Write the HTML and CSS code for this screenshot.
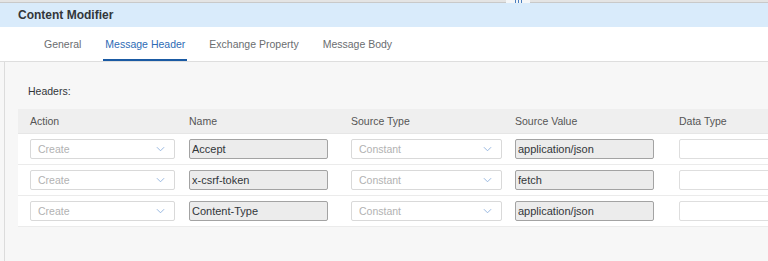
FILE: index.html
```html
<!DOCTYPE html>
<html lang="en">
<head>
    <meta charset="UTF-8">
    <title>Content Modifier</title>
    <link rel="stylesheet" href="styles.css">
</head>
<body>
    <div class="topbar">
        <div class="grip"><span></span><span></span><span></span></div>
    </div>
    <div class="title">Content Modifier</div>
    <div class="tabs">
        <div class="tab">General</div>
        <div class="tab active">Message Header</div>
        <div class="tab">Exchange Property</div>
        <div class="tab">Message Body</div>
    </div>

    <div class="content">
        <div class="section-label">Headers:</div>
        <div class="table">
            <div class="row head">
                <div class="cell">Action</div>
                <div class="cell">Name</div>
                <div class="cell">Source Type</div>
                <div class="cell">Source Value</div>
                <div class="cell">Data Type</div>
            </div>

            <div class="row">
                <div class="cell"><div class="select wide">Create<svg viewBox="0 0 10 6"><path d="M1 1l4 4 4-4"/></svg></div></div>
                <div class="cell"><input class="field" value="Accept" readonly></div>
                <div class="cell"><div class="select">Constant<svg viewBox="0 0 10 6"><path d="M1 1l4 4 4-4"/></svg></div></div>
                <div class="cell"><input class="field" value="application/json" readonly></div>
                <div class="cell"><input class="field empty" value="" readonly></div>
            </div>

            <div class="row">
                <div class="cell"><div class="select wide">Create<svg viewBox="0 0 10 6"><path d="M1 1l4 4 4-4"/></svg></div></div>
                <div class="cell"><input class="field" value="x-csrf-token" readonly></div>
                <div class="cell"><div class="select">Constant<svg viewBox="0 0 10 6"><path d="M1 1l4 4 4-4"/></svg></div></div>
                <div class="cell"><input class="field" value="fetch" readonly></div>
                <div class="cell"><input class="field empty" value="" readonly></div>
            </div>

            <div class="row">
                <div class="cell"><div class="select wide">Create<svg viewBox="0 0 10 6"><path d="M1 1l4 4 4-4"/></svg></div></div>
                <div class="cell"><input class="field" value="Content-Type" readonly></div>
                <div class="cell"><div class="select">Constant<svg viewBox="0 0 10 6"><path d="M1 1l4 4 4-4"/></svg></div></div>
                <div class="cell"><input class="field" value="application/json" readonly></div>
                <div class="cell"><input class="field empty" value="" readonly></div>
            </div>
        </div>
    </div>
</body>
</html>
```

FILE: styles.css
```css
body {
    margin: 0;
    font-family: 'Liberation Sans', Arial, sans-serif;
    background: #f7f7f7;
    height: 261px;
    overflow: hidden;
    display: flex;
    flex-direction: column;
}

.topbar {
    position: relative;
    height: 2px;
    background: #e4e4e4;
    border-bottom: 1px solid #c9c9c9;
}

.grip {
    position: absolute;
    left: 506px;
    top: 0;
    width: 24px;
    height: 3px;
    background: #f4f6f8;
    display: flex;
    justify-content: center;
    gap: 2px;
}

.grip span {
    width: 1px;
    height: 3px;
    background: #4a7fc0;
}

.title {
    height: 24px;
    line-height: 24px;
    padding-left: 18px;
    background: #d9ebfb;
    color: #32363a;
    font-size: 12px;
    font-weight: bold;
}

.tabs {
    display: flex;
    gap: 20px;
    height: 34px;
    padding-left: 42px;
    background: #fff;
    border-bottom: 1px solid #dedede;
}

.tab {
    display: flex;
    align-items: center;
    padding: 0 2px;
    font-size: 10.5px;
    color: #6a6d70;
}

.tab.active {
    color: #2d6bb5;
    box-shadow: inset 0 -2px 0 #1a5aa3;
}

.content {
    flex: 1;
    min-height: 0;
    margin-left: 4px;
    border-left: 1px solid #dcdcdc;
    padding-top: 22px;
}

.section-label {
    height: 14px;
    line-height: 14px;
    padding-left: 23px;
    margin-bottom: 11px;
    font-size: 10.5px;
    color: #32363a;
}

.table {
    margin-left: 13px;
    overflow: hidden;
}

.row {
    display: grid;
    grid-template-columns: 159px 162px 164px 164px 1fr;
    align-items: center;
    height: 30px;
    background: #fff;
    border-bottom: 1px solid #ebebeb;
}

.row.head {
    height: 24px;
    background: #efefef;
    border-bottom: 1px solid #e6e6e6;
}

.cell {
    padding-left: 12px;
    font-size: 10.5px;
    color: #555;
}

.select {
    display: flex;
    align-items: center;
    justify-content: space-between;
    box-sizing: border-box;
    width: 151px;
    height: 20px;
    padding: 0 9px 0 7px;
    background: #fff;
    border: 1px solid #d9d9d9;
    border-radius: 2px;
    color: #b2b2b2;
    font-size: 10.5px;
}

.select.wide {
    width: 145px;
}

.select svg {
    width: 9px;
    height: 6px;
    fill: none;
    stroke: #8db0dc;
    stroke-width: 1;
}

.field {
    display: block;
    box-sizing: border-box;
    width: 139px;
    height: 20px;
    margin: 0;
    padding: 0 2px;
    background: #ececec;
    border: 1px solid #a3a3a3;
    border-radius: 2px;
    font-family: 'Liberation Sans', Arial, sans-serif;
    font-size: 11px;
    color: #32363a;
    outline: none;
}

.field.empty {
    width: 100px;
    background: #fff;
    border-color: #dedede;
}
```
